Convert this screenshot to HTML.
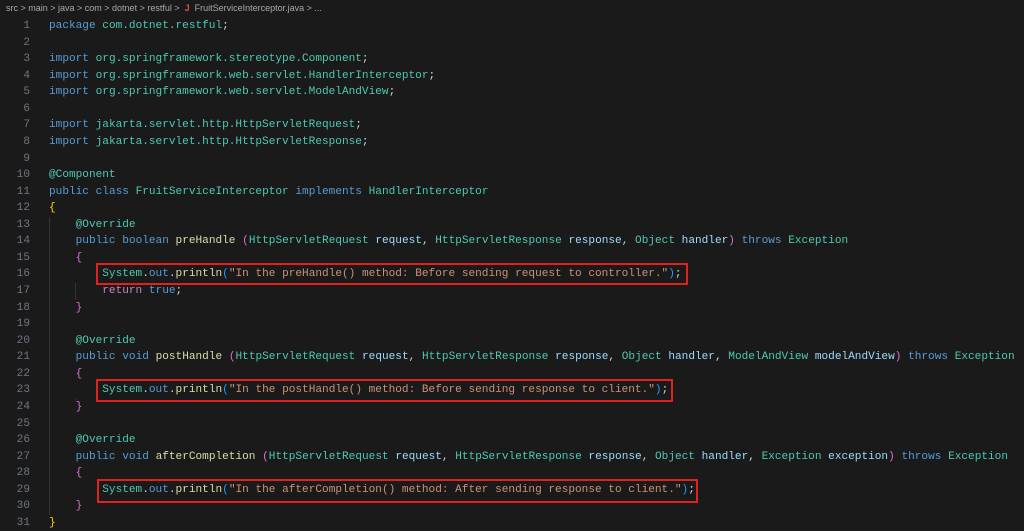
<!DOCTYPE html>
<html><head><meta charset="utf-8"><style>
*{margin:0;padding:0}
body{width:1024px;height:529px;background:#1a1a1a;overflow:hidden;position:relative;font-family:"Liberation Mono",monospace}
.bc{position:absolute;left:6px;top:3px;font:9px "Liberation Sans",sans-serif;color:#a9a9a9;white-space:pre}
.bc .j{color:#e04c4c;font-weight:bold}
.ln{position:absolute;left:0;width:30px;text-align:right;color:#6e7681;font-size:11.1px;line-height:16.57px}
.code{position:absolute;left:49px;top:18px;font-size:11.1px;line-height:16.57px;color:#d4d4d4;white-space:pre}
.k{color:#569cd6}.t{color:#4ec9b0}.m{color:#dcdcaa}.v{color:#9cdcfe}.s{color:#ce9178}.c{color:#c586c0}
.y{color:#ffd700}.p{color:#da70d6}.b{color:#179fff}
.g{position:absolute;width:1px;background:#333}
.box{position:absolute;border:2px solid #e0221e;box-sizing:border-box}
</style></head><body>
<div class="bc">src &gt; main &gt; java &gt; com &gt; dotnet &gt; restful &gt;  <span class="j">J</span>  FruitServiceInterceptor.java &gt; ...</div>
<div class="ln" style="top:18px">1<br>2<br>3<br>4<br>5<br>6<br>7<br>8<br>9<br>10<br>11<br>12<br>13<br>14<br>15<br>16<br>17<br>18<br>19<br>20<br>21<br>22<br>23<br>24<br>25<br>26<br>27<br>28<br>29<br>30<br>31</div>
<div class="g" style="left:49px;top:217px;height:298px"></div>
<div class="g" style="left:75px;top:283px;height:17px"></div>
<div class="g" style="left:75px;top:399px;height:1px"></div>
<div class="code"><span class="k">package</span> <span class="t">com.dotnet.restful</span>;

<span class="k">import</span> <span class="t">org.springframework.stereotype.Component</span>;
<span class="k">import</span> <span class="t">org.springframework.web.servlet.HandlerInterceptor</span>;
<span class="k">import</span> <span class="t">org.springframework.web.servlet.ModelAndView</span>;

<span class="k">import</span> <span class="t">jakarta.servlet.http.HttpServletRequest</span>;
<span class="k">import</span> <span class="t">jakarta.servlet.http.HttpServletResponse</span>;

<span class="t">@Component</span>
<span class="k">public</span> <span class="k">class</span> <span class="t">FruitServiceInterceptor</span> <span class="k">implements</span> <span class="t">HandlerInterceptor</span>
<span class="y">{</span>
    <span class="t">@Override</span>
    <span class="k">public</span> <span class="k">boolean</span> <span class="m">preHandle</span> <span class="p">(</span><span class="t">HttpServletRequest</span> <span class="v">request</span>, <span class="t">HttpServletResponse</span> <span class="v">response</span>, <span class="t">Object</span> <span class="v">handler</span><span class="p">)</span> <span class="k">throws</span> <span class="t">Exception</span>
    <span class="p">{</span>
        <span class="t">System</span>.<span class="k">out</span>.<span class="m">println</span><span class="b">(</span><span class="s">"In the preHandle() method: Before sending request to controller."</span><span class="b">)</span>;
        <span class="c">return</span> <span class="k">true</span>;
    <span class="p">}</span>

    <span class="t">@Override</span>
    <span class="k">public</span> <span class="k">void</span> <span class="m">postHandle</span> <span class="p">(</span><span class="t">HttpServletRequest</span> <span class="v">request</span>, <span class="t">HttpServletResponse</span> <span class="v">response</span>, <span class="t">Object</span> <span class="v">handler</span>, <span class="t">ModelAndView</span> <span class="v">modelAndView</span><span class="p">)</span> <span class="k">throws</span> <span class="t">Exception</span>
    <span class="p">{</span>
        <span class="t">System</span>.<span class="k">out</span>.<span class="m">println</span><span class="b">(</span><span class="s">"In the postHandle() method: Before sending response to client."</span><span class="b">)</span>;
    <span class="p">}</span>

    <span class="t">@Override</span>
    <span class="k">public</span> <span class="k">void</span> <span class="m">afterCompletion</span> <span class="p">(</span><span class="t">HttpServletRequest</span> <span class="v">request</span>, <span class="t">HttpServletResponse</span> <span class="v">response</span>, <span class="t">Object</span> <span class="v">handler</span>, <span class="t">Exception</span> <span class="v">exception</span><span class="p">)</span> <span class="k">throws</span> <span class="t">Exception</span>
    <span class="p">{</span>
        <span class="t">System</span>.<span class="k">out</span>.<span class="m">println</span><span class="b">(</span><span class="s">"In the afterCompletion() method: After sending response to client."</span><span class="b">)</span>;
    <span class="p">}</span>
<span class="y">}</span></div>
<div class="box" style="left:96px;top:263px;width:592px;height:22px"></div>
<div class="box" style="left:96px;top:379px;width:577px;height:23px"></div>
<div class="box" style="left:97px;top:479px;width:601px;height:24px"></div>
</body></html>
